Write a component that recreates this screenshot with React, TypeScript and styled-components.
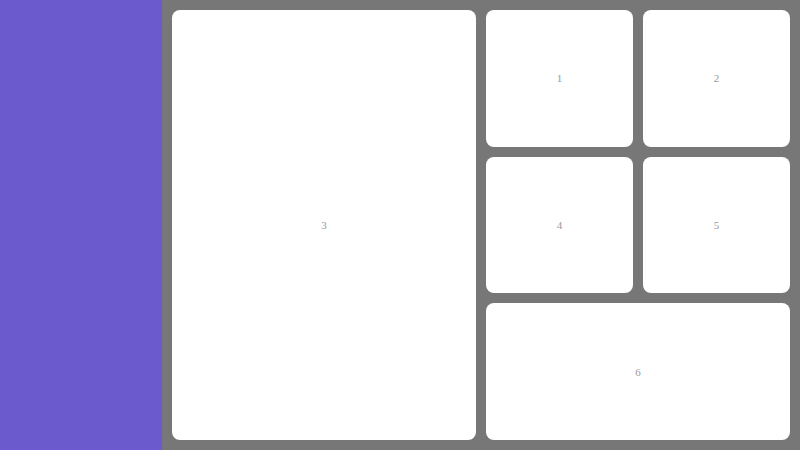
import React from "react";
import styled, { createGlobalStyle } from "styled-components";

const GlobalStyle = createGlobalStyle`
  html, body {
    margin: 0;
    padding: 0;
    height: 100%;
  }
  #root {
    height: 100%;
  }
`;

const Page = styled("div")`
  display: flex;
  height: 450px;
  width: 800px;
  font-family: "Liberation Serif", "DejaVu Serif", serif;
`;

const Sidebar = styled("aside")`
  width: 162px;
  flex-shrink: 0;
  background-color: slateblue;
`;

const Grid = styled("main")`
  flex: 1;
  display: grid;
  grid-template-columns: repeat(4, 1fr);
  grid-template-rows: repeat(3, 1fr);
  gap: 10px;
  padding: 10px;
  background-color: #777777;
`;

const Tile = styled("div")<{ col: string; row: string }>`
  grid-column: ${(props) => props.col};
  grid-row: ${(props) => props.row};
  display: flex;
  align-items: center;
  justify-content: center;
  background-color: white;
  border-radius: 8px;
  color: #999999;
  font-size: 11px;
`;

const tiles = [
  { label: "3", col: "1 / 3", row: "1 / 4" },
  { label: "1", col: "3", row: "1" },
  { label: "2", col: "4", row: "1" },
  { label: "4", col: "3", row: "2" },
  { label: "5", col: "4", row: "2" },
  { label: "6", col: "3 / 5", row: "3" },
];

export default function App() {
  return (
    <>
      <GlobalStyle />
      <Page>
        <Sidebar />
        <Grid>
          {tiles.map((tile) => (
            <Tile key={tile.label} col={tile.col} row={tile.row}>
              {tile.label}
            </Tile>
          ))}
        </Grid>
      </Page>
    </>
  );
}
